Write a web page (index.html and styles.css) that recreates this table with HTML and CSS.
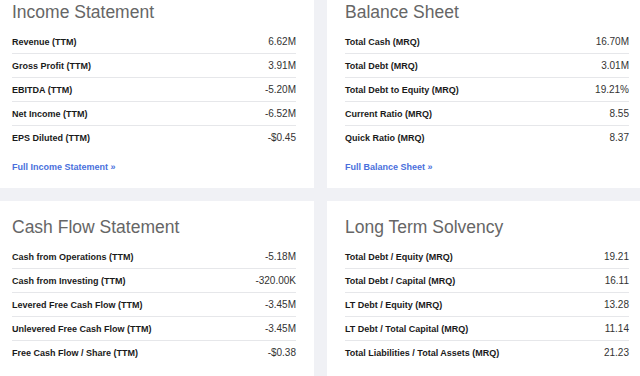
FILE: index.html
```html
<!DOCTYPE html>
<html>
<head>
<meta charset="utf-8">
<link rel="stylesheet" href="styles.css">
</head>
<body>
<div class="grid">
  <section class="card">
    <h2 class="title">Income Statement</h2>
    <div class="row"><span class="label">Revenue (TTM)</span><span class="value">6.62M</span></div>
    <div class="row"><span class="label">Gross Profit (TTM)</span><span class="value">3.91M</span></div>
    <div class="row"><span class="label">EBITDA (TTM)</span><span class="value">-5.20M</span></div>
    <div class="row"><span class="label">Net Income (TTM)</span><span class="value">-6.52M</span></div>
    <div class="row"><span class="label">EPS Diluted (TTM)</span><span class="value">-$0.45</span></div>
    <a class="more" href="#">Full Income Statement »</a>
  </section>
  <section class="card">
    <h2 class="title">Balance Sheet</h2>
    <div class="row"><span class="label">Total Cash (MRQ)</span><span class="value">16.70M</span></div>
    <div class="row"><span class="label">Total Debt (MRQ)</span><span class="value">3.01M</span></div>
    <div class="row"><span class="label">Total Debt to Equity (MRQ)</span><span class="value">19.21%</span></div>
    <div class="row"><span class="label">Current Ratio (MRQ)</span><span class="value">8.55</span></div>
    <div class="row"><span class="label">Quick Ratio (MRQ)</span><span class="value">8.37</span></div>
    <a class="more" href="#">Full Balance Sheet »</a>
  </section>
  <section class="card">
    <h2 class="title">Cash Flow Statement</h2>
    <div class="row"><span class="label">Cash from Operations (TTM)</span><span class="value">-5.18M</span></div>
    <div class="row"><span class="label">Cash from Investing (TTM)</span><span class="value">-320.00K</span></div>
    <div class="row"><span class="label">Levered Free Cash Flow (TTM)</span><span class="value">-3.45M</span></div>
    <div class="row"><span class="label">Unlevered Free Cash Flow (TTM)</span><span class="value">-3.45M</span></div>
    <div class="row"><span class="label">Free Cash Flow / Share (TTM)</span><span class="value">-$0.38</span></div>
  </section>
  <section class="card">
    <h2 class="title">Long Term Solvency</h2>
    <div class="row"><span class="label">Total Debt / Equity (MRQ)</span><span class="value">19.21</span></div>
    <div class="row"><span class="label">Total Debt / Capital (MRQ)</span><span class="value">16.11</span></div>
    <div class="row"><span class="label">LT Debt / Equity (MRQ)</span><span class="value">13.28</span></div>
    <div class="row"><span class="label">LT Debt / Total Capital (MRQ)</span><span class="value">11.14</span></div>
    <div class="row"><span class="label">Total Liabilities / Total Assets (MRQ)</span><span class="value">21.23</span></div>
  </section>
</div>
</body>
</html>
```
FILE: styles.css
```css
html, body {
  margin: 0;
  padding: 0;
  background: #f0f1f5;
  overflow: hidden;
  font-family: "Liberation Sans", Arial, sans-serif;
}
.grid {
  display: grid;
  grid-template-columns: 320px 320px;
  column-gap: 13px;
  row-gap: 13px;
  margin: -14px 0 0 -6px;
  width: 653px;
}
.card {
  background: #ffffff;
  padding: 15px 18px 15px 18px;
  display: flex;
  flex-direction: column;
}
.title {
  margin: 0 0 7px 0;
  font-size: 17.5px;
  line-height: 22px;
  font-weight: normal;
  color: #666666;
}
.row {
  display: flex;
  justify-content: space-between;
  align-items: center;
  height: 23px;
  border-bottom: 1px solid #e6e7ea;
}
.row:last-of-type {
  border-bottom: none;
}
.label {
  font-size: 9px;
  font-weight: bold;
  color: #1a1a1a;
}
.value {
  font-size: 10px;
  color: #333333;
}
.more {
  margin-top: 12px;
  font-size: 9px;
  line-height: 12px;
  font-weight: bold;
  color: #4a6fdc;
  text-decoration: none;
}
```
